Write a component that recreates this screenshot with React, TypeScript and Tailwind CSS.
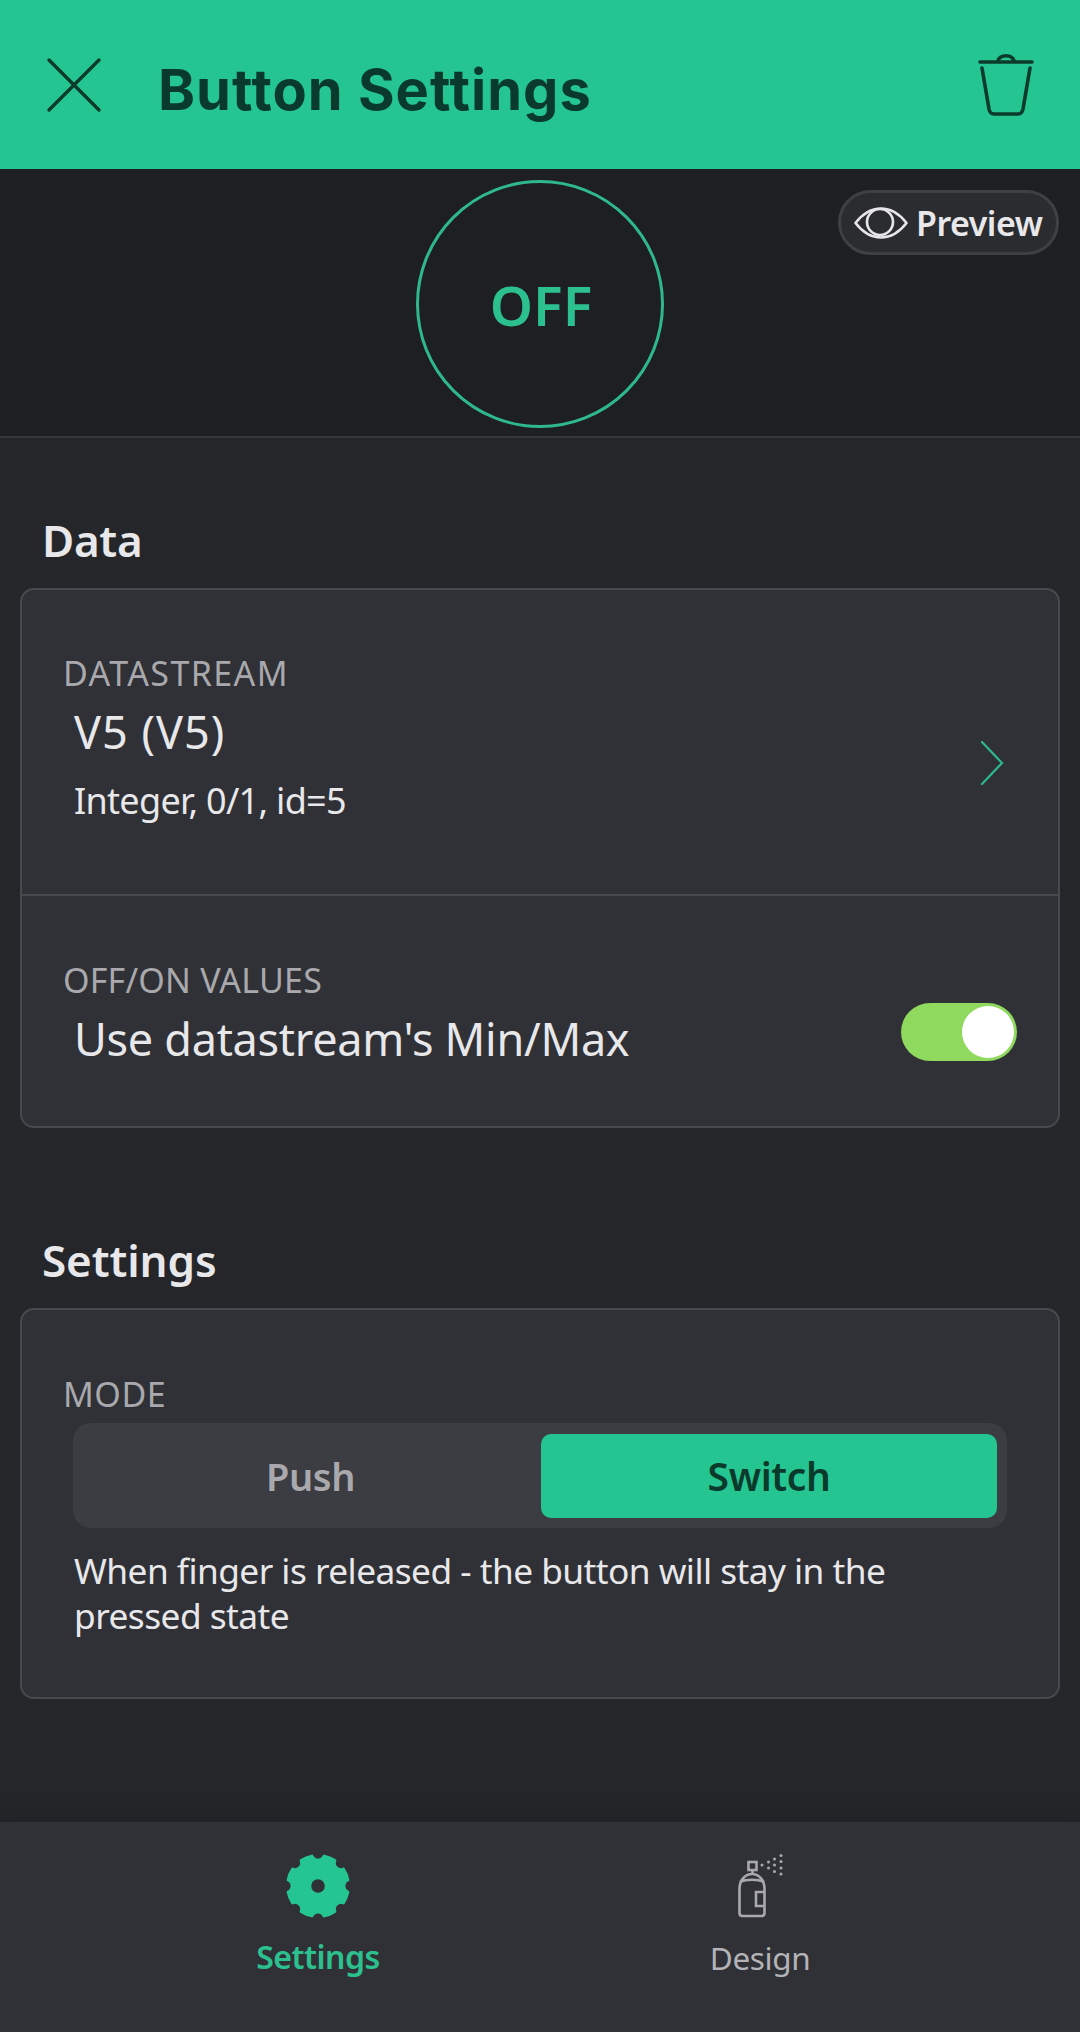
const gearPath = (() => {
  const cx = 50, cy = 50, R = 30.5, notchR = 6.6;
  const n = 8;
  const step = (Math.PI * 2) / n;
  const half = 0.2;
  const p = (a: number) => `${(cx + R * Math.cos(a)).toFixed(2)} ${(cy + R * Math.sin(a)).toFixed(2)}`;
  const parts: string[] = [];
  for (let i = 0; i < n; i++) {
    const a = -Math.PI / 2 + i * step;
    parts.push(i === 0 ? `M${p(a - half)}` : `A${R} ${R} 0 0 1 ${p(a - half)}`);
    parts.push(`A${notchR} ${notchR} 0 0 0 ${p(a + half)}`);
  }
  parts.push(`A${R} ${R} 0 0 1 ${p(-Math.PI / 2 - half)}Z`);
  return parts.join(" ");
})();

const ui = { fontFamily: '"Noto Sans", sans-serif' };

function Label({ children, className }: { children: string; className: string }) {
  return <div className={`pl-[41px] text-[34px] leading-[36px] text-[#a9a9ad] ${className}`}>{children}</div>;
}

export default function App() {
  return (
    <div style={ui} className="flex h-[2032px] w-[1080px] flex-col overflow-hidden bg-[#25262a] text-[#e8e8ea]">
      <header className="flex h-[169px] shrink-0 items-center bg-[#25c591] pl-[46px] pr-[46px]">
        <svg width="56" height="56" viewBox="0 0 56 56" fill="none" stroke="#0c3b2b" strokeWidth="3.4" strokeLinecap="round">
          <path d="M3 3 L53 53 M53 3 L3 53" />
        </svg>
        <h1
          style={{ fontFamily: 'Inter, sans-serif' }}
          className="ml-[56px] flex-1 pt-[11px] text-[56px] leading-[64px] font-bold tracking-[1px] text-[#0a3a2b]"
        >
          Button Settings
        </h1>
        <svg width="56" height="62" viewBox="0 0 56 62" fill="none" stroke="#0c3b2b" strokeWidth="3.6" strokeLinecap="round" strokeLinejoin="round">
          <path d="M2 8 H54" />
          <path d="M20 7 C21 3 24 1.8 28 1.8 C32 1.8 35 3 36 7" />
          <path d="M4 14 L11 55 Q12 60 16 60 H40 Q44 60 45 55 L52 14" />
        </svg>
      </header>

      <section className="relative flex h-[269px] shrink-0 items-center justify-center border-b-[2px] border-[#36373b] bg-[#1d1f22] pt-[2px]">
        <div className="flex h-[248px] w-[248px] items-center justify-center rounded-full border-[3px] border-[#2fb88c]">
          <span className="pl-[2px] pt-[2px] text-[55px] leading-[60px] font-semibold text-[#2cc08f]">OFF</span>
        </div>
        <button className="absolute top-[21px] right-[21px] flex h-[65px] w-[221px] items-center rounded-full border-[3px] border-[#3f4044] bg-[#2b2c30] pl-[13px]">
          <svg width="54" height="32" viewBox="0 0 54 32" fill="none" stroke="#e6e6e8" strokeWidth="2.6" strokeLinejoin="round">
            <path d="M1.5 16 C10 5 18 1.5 27 1.5 C36 1.5 44 5 52.5 16 C44 27 36 30.5 27 30.5 C18 30.5 10 27 1.5 16 Z" />
            <circle cx="26" cy="15" r="13" />
          </svg>
          <span className="ml-[8px] text-[34px] leading-[40px] font-semibold tracking-[-0.5px] text-[#e8e8ea]">Preview</span>
        </button>
      </section>

      <main className="flex-1 px-[20px]">
        <h2 className="mt-[74px] pl-[22px] text-[44px] leading-[56px] font-semibold tracking-[-0.3px] text-[#e8e8ea]">Data</h2>
        <div className="mt-[20px] h-[540px] rounded-[14px] border-[2px] border-[#48494d] bg-[#303136]">
          <div className="relative h-[306px] border-b-[2px] border-[#48494d]">
            <Label className="pt-[65px] tracking-[1.4px]">DATASTREAM</Label>
            <div className="mt-[15px] pl-[52px] text-[45px] leading-[52px] tracking-[1px]">V5 (V5)</div>
            <div className="mt-[23px] pl-[52px] text-[36px] leading-[40px] tracking-[-0.7px]">Integer, 0/1, id=5</div>
            <svg className="absolute top-[150px] right-[54px]" width="24" height="46" viewBox="0 0 24 46" fill="none" stroke="#2cb98c" strokeWidth="2.2" strokeLinecap="round">
              <path d="M2 2 L22 23 L2 44" />
            </svg>
          </div>
          <div className="relative">
            <Label className="pt-[66px] tracking-[0.2px]">OFF/ON VALUES</Label>
            <div className="mt-[15px] pl-[52px] text-[45px] leading-[52px] tracking-[-0.3px]">Use datastream's Min/Max</div>
            <div className="absolute top-[107px] right-[41px] h-[58px] w-[116px] rounded-full bg-[#8fd95e] p-[3px]">
              <div className="ml-auto h-[52px] w-[52px] rounded-full bg-white" />
            </div>
          </div>
        </div>

        <h2 className="mt-[104px] pl-[22px] text-[44px] leading-[56px] font-semibold tracking-[-0.1px] text-[#e8e8ea]">Settings</h2>
        <div className="mt-[20px] h-[391px] rounded-[14px] border-[2px] border-[#48494d] bg-[#303136]">
          <Label className="pt-[66px] tracking-[0.5px]">MODE</Label>
          <div className="mx-[51px] mt-[11px] flex h-[105px] items-center rounded-[18px] bg-[#3c3d42] pr-[10px]">
            <div className="flex-1 pl-[7px] text-center text-[38px] leading-[44px] font-semibold tracking-[-0.4px] text-[#a9a9ad]">Push</div>
            <div className="flex h-[84px] w-[456px] items-center justify-center rounded-[10px] bg-[#25c591] text-[39px] leading-[44px] font-semibold tracking-[-0.4px] text-[#0a3a2b]">
              Switch
            </div>
          </div>
          <p className="mt-[20px] w-[900px] pl-[52px] text-[35.3px] leading-[45px] tracking-[-0.55px]">
            When finger is released - the button will stay in the pressed state
          </p>
        </div>
      </main>

      <nav className="grid h-[210px] shrink-0 grid-cols-[636px_1fr] bg-[#303136] shadow-[0_-10px_20px_rgba(0,0,0,0.12)]">
        <div className="flex w-[636px] flex-col items-center pt-[29px]">
          <svg width="100" height="70" viewBox="0 15 100 70">
            <path d={gearPath} fill="#25c591" stroke="#25c591" strokeWidth="3" strokeLinejoin="round" />
            <circle cx="50" cy="50" r="6.8" fill="#303136" />
          </svg>
          <span className="mt-[16px] text-[32px] leading-[40px] font-semibold tracking-[-0.5px] text-[#2cc08f]">Settings</span>
        </div>
        <div className="flex w-[248px] flex-col items-center pt-[18px]">
          <svg width="80" height="90" viewBox="0 0 80 90" fill="none" stroke="#a9a9ad" strokeWidth="2.6">
            <rect x="28.5" y="22" width="8" height="8" />
            <path d="M32.5 30 V33" />
            <path d="M19.5 48 C20 39 26 34 32 34 C38 34 44 39 44.5 48 V73 Q44.5 76 41.5 76 H22.5 Q19.5 76 19.5 73 Z" />
            <path d="M20 42 C26 39 38 39 44 42" />
            <path d="M44 52 H36 V66 H44" />
            <g fill="#a9a9ad" stroke="none">
              <circle cx="42" cy="25" r="1.5" />
              <circle cx="48.5" cy="22" r="1.5" />
              <circle cx="48.5" cy="28" r="1.5" />
              <circle cx="54.5" cy="19" r="1.5" />
              <circle cx="54.5" cy="25" r="1.5" />
              <circle cx="54.5" cy="31.5" r="1.5" />
              <circle cx="61" cy="15.5" r="1.5" />
              <circle cx="61" cy="21.5" r="1.5" />
              <circle cx="61" cy="28" r="1.5" />
              <circle cx="61" cy="34" r="1.5" />
            </g>
          </svg>
          <span className="mt-[8px] text-[31.5px] leading-[40px] tracking-[-0.4px] text-[#b4b4b8]">Design</span>
        </div>
      </nav>
    </div>
  );
}
